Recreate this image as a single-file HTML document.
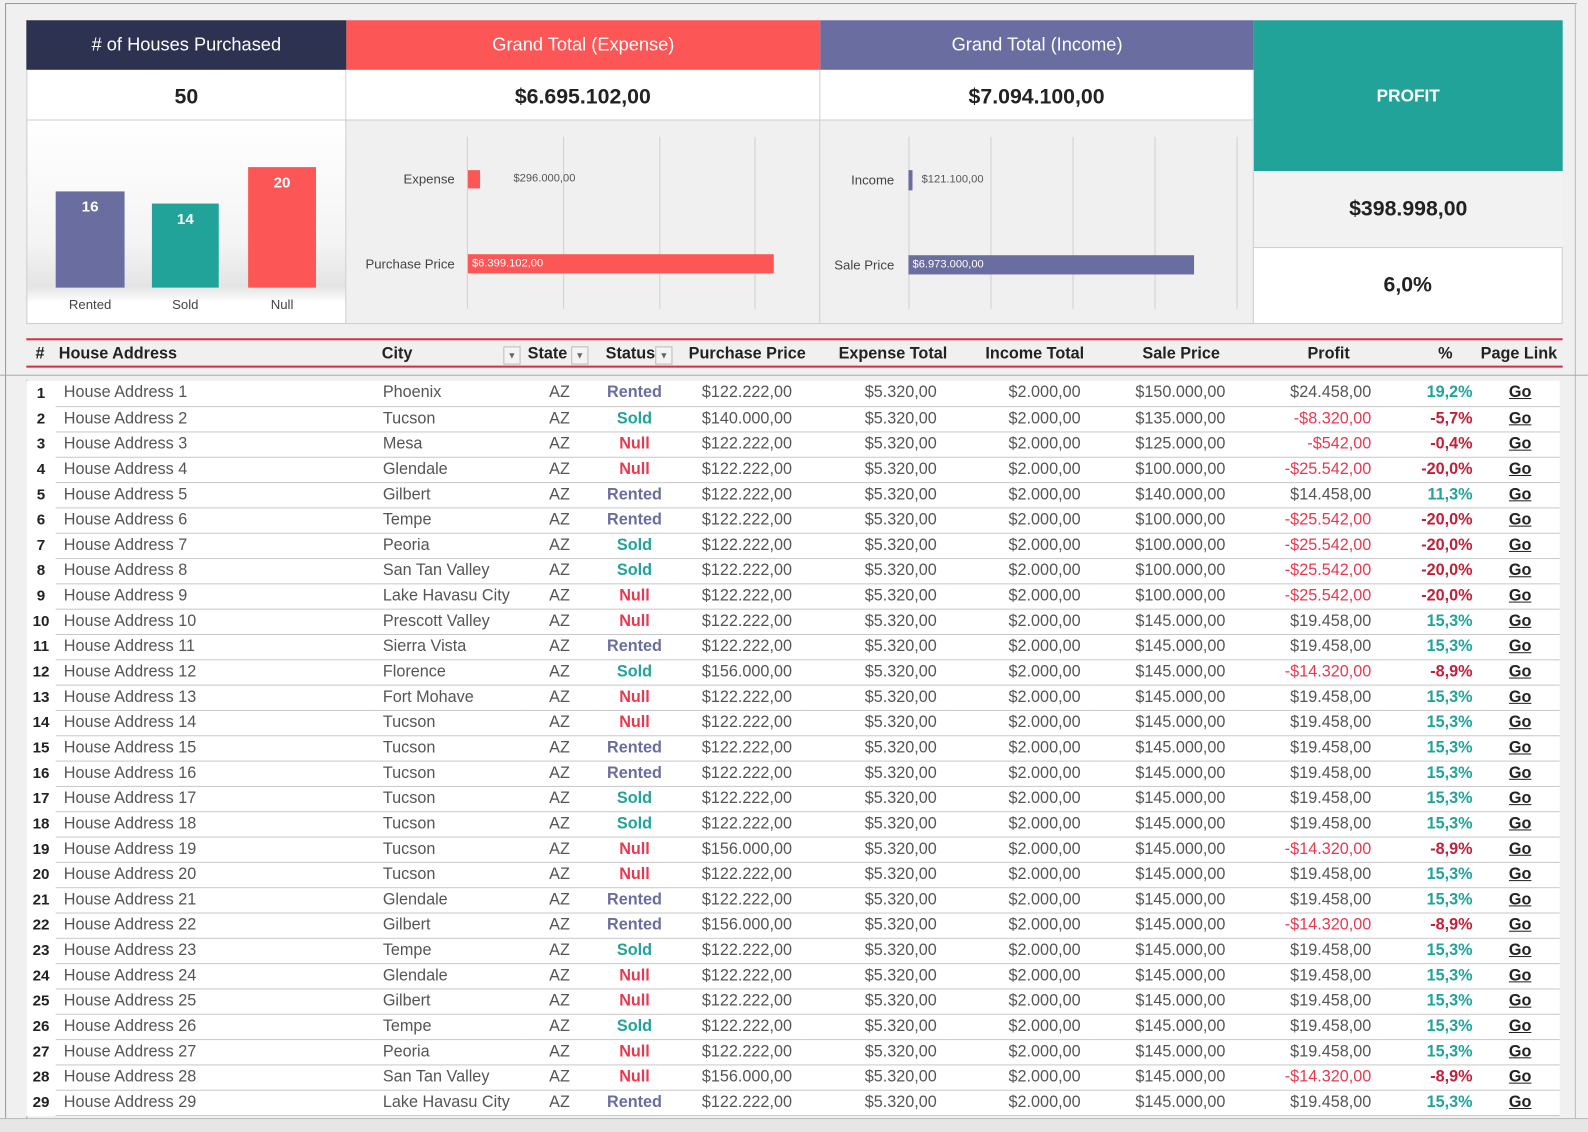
<!DOCTYPE html>
<html><head><meta charset="utf-8">
<style>
*{margin:0;padding:0;box-sizing:border-box}
body{width:1588px;height:1128px;background:#f0f0f0;font-family:"Liberation Sans",sans-serif;position:relative;overflow:hidden;color:#333}
#w{position:absolute;left:0;top:0;width:1568px;height:1114px;transform:scale(1.01276);transform-origin:0 0}
.a{position:absolute}
.hd{position:absolute;top:20px;height:49px;color:#fff;font-size:18px;display:flex;align-items:center;justify-content:center}
.val{position:absolute;top:69px;height:50px;background:#fff;font-size:21px;font-weight:bold;color:#222;display:flex;align-items:center;justify-content:center;border-bottom:1px solid #ccc;border-right:1px solid #ccc;padding-top:4px}
.gl{position:absolute;width:1px;background:#d0d0d0;top:135px;height:170px}
.lbl{position:absolute;font-size:13px;color:#444;text-align:right}
.sm{position:absolute;font-size:11px;color:#555}
table{position:absolute;left:26px;top:376px;border-collapse:collapse;table-layout:fixed;width:1514px;background:#fff;font-size:16px;color:#555}
td{height:25px;border-bottom:1px solid #c8c8c8;white-space:nowrap;overflow:hidden;padding:0 8px}
td:first-child{border-bottom:none;text-align:center;font-weight:bold;color:#222;padding:0;font-size:15px}
.c{text-align:center}.r{text-align:right}
.R{color:#6a6d9f;font-weight:bold}.S{color:#22a39a;font-weight:bold}.N{color:#e8384f;font-weight:bold}
.neg{color:#e8384f}.pp{color:#22a39a;font-weight:bold}.np{color:#c0203a;font-weight:bold}
.go{font-weight:bold;text-decoration:underline;color:#222}
.th{position:absolute;top:341px;font-size:16px;font-weight:bold;color:#222}
.flt{position:absolute;top:342px;width:17px;height:18px;border:1px solid #bbb;background:#f4f4f4;font-size:9px;color:#666;text-align:center;line-height:16px}
</style></head><body><div id="w">
<div class="a" style="left:5px;top:3px;width:1px;height:1108px;background:#999"></div>
<div class="a" style="left:5px;top:3px;width:1552px;height:1px;background:#999"></div>
<div class="a" style="left:1555px;top:3px;width:1px;height:1108px;background:#bbb"></div>
<div class="a" style="left:0;top:1104px;width:1568px;height:14px;background:#e6e6e6;border-top:1px solid #bbb"></div>

<div class="hd" style="left:26px;width:316px;background:#2d3250">&#35; of Houses Purchased</div>
<div class="hd" style="left:342px;width:468px;background:#fc5656">Grand Total (Expense)</div>
<div class="hd" style="left:810px;width:428px;background:#6a6d9f">Grand Total (Income)</div>
<div class="a" style="left:1238px;top:20px;width:305px;height:149px;background:#22a39a;color:#fff;font-weight:bold;font-size:17px;display:flex;align-items:center;justify-content:center">PROFIT</div>
<div class="val" style="left:26px;width:316px;border-left:1px solid #ccc">50</div>
<div class="val" style="left:342px;width:468px">$6.695.102,00</div>
<div class="val" style="left:810px;width:428px">$7.094.100,00</div>
<div class="a" style="left:1238px;top:169px;width:305px;height:76px;background:#f2f2f2;border-bottom:1px solid #ccc;font-size:21px;font-weight:bold;color:#222;display:flex;align-items:center;justify-content:center">$398.998,00</div>
<div class="a" style="left:1238px;top:245px;width:305px;height:75px;background:#fff;border-bottom:1px solid #ccc;border-right:1px solid #ccc;font-size:21px;font-weight:bold;color:#222;display:flex;align-items:center;justify-content:center">6,0%</div>

<div class="a" style="left:26px;top:119px;width:316px;height:201px;background:linear-gradient(#fff 0%,#f4f4f4 60%,#e4e4e4 82%,#fff 90%);border:1px solid #ccc;border-top:none"></div>
<div class="a" style="left:55px;top:189px;width:68px;height:95px;background:#6a6d9f;color:#fff;font-weight:bold;font-size:15px;text-align:center;padding-top:7px">16</div>
<div class="a" style="left:150px;top:201px;width:66px;height:83px;background:#22a39a;color:#fff;font-weight:bold;font-size:15px;text-align:center;padding-top:7px">14</div>
<div class="a" style="left:245px;top:165px;width:67px;height:119px;background:#fc5656;color:#fff;font-weight:bold;font-size:15px;text-align:center;padding-top:7px">20</div>
<div class="lbl" style="left:55px;top:293px;width:68px;text-align:center">Rented</div>
<div class="lbl" style="left:150px;top:293px;width:66px;text-align:center">Sold</div>
<div class="lbl" style="left:245px;top:293px;width:67px;text-align:center">Null</div>

<div class="a" style="left:342px;top:119px;width:468px;height:201px;background:#f0f0f0;border-bottom:1px solid #ccc;border-right:1px solid #ccc"></div>
<div class="gl" style="left:461px"></div><div class="gl" style="left:556px"></div><div class="gl" style="left:651px"></div><div class="gl" style="left:745px"></div>
<div class="lbl" style="left:350px;top:169px;width:99px">Expense</div>
<div class="lbl" style="left:340px;top:253px;width:109px">Purchase Price</div>
<div class="a" style="left:462px;top:168px;width:12px;height:18px;background:#fc5656"></div>
<div class="sm" style="left:507px;top:170px">$296.000,00</div>
<div class="a" style="left:462px;top:251px;width:302px;height:19px;background:#fc5656"></div>
<div class="sm" style="left:466px;top:254px;color:#fff">$6.399.102,00</div>

<div class="a" style="left:810px;top:119px;width:428px;height:201px;background:#f0f0f0;border-bottom:1px solid #ccc;border-right:1px solid #ccc"></div>
<div class="gl" style="left:897px"></div><div class="gl" style="left:978px"></div><div class="gl" style="left:1059px"></div><div class="gl" style="left:1140px"></div><div class="gl" style="left:1221px"></div>
<div class="lbl" style="left:810px;top:170px;width:73px">Income</div>
<div class="lbl" style="left:810px;top:254px;width:73px">Sale Price</div>
<div class="a" style="left:897px;top:168px;width:4px;height:20px;background:#6a6d9f"></div>
<div class="sm" style="left:910px;top:171px">$121.100,00</div>
<div class="a" style="left:897px;top:252px;width:282px;height:19px;background:#6a6d9f"></div>
<div class="sm" style="left:901px;top:255px;color:#fff">$6.973.000,00</div>

<div class="a" style="left:26px;top:334px;width:1517px;height:2px;background:#d0304a"></div>
<div class="a" style="left:26px;top:361px;width:1517px;height:2px;background:#d0304a"></div>
<div class="a" style="left:0;top:370px;width:1568px;height:1px;background:#aaa"></div>
<div class="th" style="left:35px">#</div>
<div class="th" style="left:58px">House Address</div>
<div class="th" style="left:377px">City</div>
<div class="flt" style="left:497px">▼</div>
<div class="th" style="left:521px">State</div>
<div class="flt" style="left:564px">▼</div>
<div class="th" style="left:598px">Status</div>
<div class="flt" style="left:647px">▼</div>
<div class="th" style="left:680px">Purchase Price</div>
<div class="th" style="left:828px">Expense Total</div>
<div class="th" style="left:973px">Income Total</div>
<div class="th" style="left:1128px">Sale Price</div>
<div class="th" style="left:1291px">Profit</div>
<div class="th" style="left:1420px">%</div>
<div class="th" style="left:1462px">Page Link</div>
<div class="a" style="left:26px;top:375px;width:1px;height:730px;background:#aaa"></div>

<table>
<colgroup><col style="width:29px"><col style="width:315px"><col style="width:150px"><col style="width:65px"><col style="width:83px"><col style="width:122px"><col style="width:143px"><col style="width:142px"><col style="width:143px"><col style="width:144px"><col style="width:100px"><col style="width:78px"></colgroup>
<tr><td>1</td><td>House Address 1</td><td>Phoenix</td><td class="c">AZ</td><td class="c R">Rented</td><td class="r">$122.222,00</td><td class="r">$5.320,00</td><td class="r">$2.000,00</td><td class="r">$150.000,00</td><td class="r">$24.458,00</td><td class="r pp">19,2%</td><td class="c go">Go</td></tr>
<tr><td>2</td><td>House Address 2</td><td>Tucson</td><td class="c">AZ</td><td class="c S">Sold</td><td class="r">$140.000,00</td><td class="r">$5.320,00</td><td class="r">$2.000,00</td><td class="r">$135.000,00</td><td class="r neg">-$8.320,00</td><td class="r np">-5,7%</td><td class="c go">Go</td></tr>
<tr><td>3</td><td>House Address 3</td><td>Mesa</td><td class="c">AZ</td><td class="c N">Null</td><td class="r">$122.222,00</td><td class="r">$5.320,00</td><td class="r">$2.000,00</td><td class="r">$125.000,00</td><td class="r neg">-$542,00</td><td class="r np">-0,4%</td><td class="c go">Go</td></tr>
<tr><td>4</td><td>House Address 4</td><td>Glendale</td><td class="c">AZ</td><td class="c N">Null</td><td class="r">$122.222,00</td><td class="r">$5.320,00</td><td class="r">$2.000,00</td><td class="r">$100.000,00</td><td class="r neg">-$25.542,00</td><td class="r np">-20,0%</td><td class="c go">Go</td></tr>
<tr><td>5</td><td>House Address 5</td><td>Gilbert</td><td class="c">AZ</td><td class="c R">Rented</td><td class="r">$122.222,00</td><td class="r">$5.320,00</td><td class="r">$2.000,00</td><td class="r">$140.000,00</td><td class="r">$14.458,00</td><td class="r pp">11,3%</td><td class="c go">Go</td></tr>
<tr><td>6</td><td>House Address 6</td><td>Tempe</td><td class="c">AZ</td><td class="c R">Rented</td><td class="r">$122.222,00</td><td class="r">$5.320,00</td><td class="r">$2.000,00</td><td class="r">$100.000,00</td><td class="r neg">-$25.542,00</td><td class="r np">-20,0%</td><td class="c go">Go</td></tr>
<tr><td>7</td><td>House Address 7</td><td>Peoria</td><td class="c">AZ</td><td class="c S">Sold</td><td class="r">$122.222,00</td><td class="r">$5.320,00</td><td class="r">$2.000,00</td><td class="r">$100.000,00</td><td class="r neg">-$25.542,00</td><td class="r np">-20,0%</td><td class="c go">Go</td></tr>
<tr><td>8</td><td>House Address 8</td><td>San Tan Valley</td><td class="c">AZ</td><td class="c S">Sold</td><td class="r">$122.222,00</td><td class="r">$5.320,00</td><td class="r">$2.000,00</td><td class="r">$100.000,00</td><td class="r neg">-$25.542,00</td><td class="r np">-20,0%</td><td class="c go">Go</td></tr>
<tr><td>9</td><td>House Address 9</td><td>Lake Havasu City</td><td class="c">AZ</td><td class="c N">Null</td><td class="r">$122.222,00</td><td class="r">$5.320,00</td><td class="r">$2.000,00</td><td class="r">$100.000,00</td><td class="r neg">-$25.542,00</td><td class="r np">-20,0%</td><td class="c go">Go</td></tr>
<tr><td>10</td><td>House Address 10</td><td>Prescott Valley</td><td class="c">AZ</td><td class="c N">Null</td><td class="r">$122.222,00</td><td class="r">$5.320,00</td><td class="r">$2.000,00</td><td class="r">$145.000,00</td><td class="r">$19.458,00</td><td class="r pp">15,3%</td><td class="c go">Go</td></tr>
<tr><td>11</td><td>House Address 11</td><td>Sierra Vista</td><td class="c">AZ</td><td class="c R">Rented</td><td class="r">$122.222,00</td><td class="r">$5.320,00</td><td class="r">$2.000,00</td><td class="r">$145.000,00</td><td class="r">$19.458,00</td><td class="r pp">15,3%</td><td class="c go">Go</td></tr>
<tr><td>12</td><td>House Address 12</td><td>Florence</td><td class="c">AZ</td><td class="c S">Sold</td><td class="r">$156.000,00</td><td class="r">$5.320,00</td><td class="r">$2.000,00</td><td class="r">$145.000,00</td><td class="r neg">-$14.320,00</td><td class="r np">-8,9%</td><td class="c go">Go</td></tr>
<tr><td>13</td><td>House Address 13</td><td>Fort Mohave</td><td class="c">AZ</td><td class="c N">Null</td><td class="r">$122.222,00</td><td class="r">$5.320,00</td><td class="r">$2.000,00</td><td class="r">$145.000,00</td><td class="r">$19.458,00</td><td class="r pp">15,3%</td><td class="c go">Go</td></tr>
<tr><td>14</td><td>House Address 14</td><td>Tucson</td><td class="c">AZ</td><td class="c N">Null</td><td class="r">$122.222,00</td><td class="r">$5.320,00</td><td class="r">$2.000,00</td><td class="r">$145.000,00</td><td class="r">$19.458,00</td><td class="r pp">15,3%</td><td class="c go">Go</td></tr>
<tr><td>15</td><td>House Address 15</td><td>Tucson</td><td class="c">AZ</td><td class="c R">Rented</td><td class="r">$122.222,00</td><td class="r">$5.320,00</td><td class="r">$2.000,00</td><td class="r">$145.000,00</td><td class="r">$19.458,00</td><td class="r pp">15,3%</td><td class="c go">Go</td></tr>
<tr><td>16</td><td>House Address 16</td><td>Tucson</td><td class="c">AZ</td><td class="c R">Rented</td><td class="r">$122.222,00</td><td class="r">$5.320,00</td><td class="r">$2.000,00</td><td class="r">$145.000,00</td><td class="r">$19.458,00</td><td class="r pp">15,3%</td><td class="c go">Go</td></tr>
<tr><td>17</td><td>House Address 17</td><td>Tucson</td><td class="c">AZ</td><td class="c S">Sold</td><td class="r">$122.222,00</td><td class="r">$5.320,00</td><td class="r">$2.000,00</td><td class="r">$145.000,00</td><td class="r">$19.458,00</td><td class="r pp">15,3%</td><td class="c go">Go</td></tr>
<tr><td>18</td><td>House Address 18</td><td>Tucson</td><td class="c">AZ</td><td class="c S">Sold</td><td class="r">$122.222,00</td><td class="r">$5.320,00</td><td class="r">$2.000,00</td><td class="r">$145.000,00</td><td class="r">$19.458,00</td><td class="r pp">15,3%</td><td class="c go">Go</td></tr>
<tr><td>19</td><td>House Address 19</td><td>Tucson</td><td class="c">AZ</td><td class="c N">Null</td><td class="r">$156.000,00</td><td class="r">$5.320,00</td><td class="r">$2.000,00</td><td class="r">$145.000,00</td><td class="r neg">-$14.320,00</td><td class="r np">-8,9%</td><td class="c go">Go</td></tr>
<tr><td>20</td><td>House Address 20</td><td>Tucson</td><td class="c">AZ</td><td class="c N">Null</td><td class="r">$122.222,00</td><td class="r">$5.320,00</td><td class="r">$2.000,00</td><td class="r">$145.000,00</td><td class="r">$19.458,00</td><td class="r pp">15,3%</td><td class="c go">Go</td></tr>
<tr><td>21</td><td>House Address 21</td><td>Glendale</td><td class="c">AZ</td><td class="c R">Rented</td><td class="r">$122.222,00</td><td class="r">$5.320,00</td><td class="r">$2.000,00</td><td class="r">$145.000,00</td><td class="r">$19.458,00</td><td class="r pp">15,3%</td><td class="c go">Go</td></tr>
<tr><td>22</td><td>House Address 22</td><td>Gilbert</td><td class="c">AZ</td><td class="c R">Rented</td><td class="r">$156.000,00</td><td class="r">$5.320,00</td><td class="r">$2.000,00</td><td class="r">$145.000,00</td><td class="r neg">-$14.320,00</td><td class="r np">-8,9%</td><td class="c go">Go</td></tr>
<tr><td>23</td><td>House Address 23</td><td>Tempe</td><td class="c">AZ</td><td class="c S">Sold</td><td class="r">$122.222,00</td><td class="r">$5.320,00</td><td class="r">$2.000,00</td><td class="r">$145.000,00</td><td class="r">$19.458,00</td><td class="r pp">15,3%</td><td class="c go">Go</td></tr>
<tr><td>24</td><td>House Address 24</td><td>Glendale</td><td class="c">AZ</td><td class="c N">Null</td><td class="r">$122.222,00</td><td class="r">$5.320,00</td><td class="r">$2.000,00</td><td class="r">$145.000,00</td><td class="r">$19.458,00</td><td class="r pp">15,3%</td><td class="c go">Go</td></tr>
<tr><td>25</td><td>House Address 25</td><td>Gilbert</td><td class="c">AZ</td><td class="c N">Null</td><td class="r">$122.222,00</td><td class="r">$5.320,00</td><td class="r">$2.000,00</td><td class="r">$145.000,00</td><td class="r">$19.458,00</td><td class="r pp">15,3%</td><td class="c go">Go</td></tr>
<tr><td>26</td><td>House Address 26</td><td>Tempe</td><td class="c">AZ</td><td class="c S">Sold</td><td class="r">$122.222,00</td><td class="r">$5.320,00</td><td class="r">$2.000,00</td><td class="r">$145.000,00</td><td class="r">$19.458,00</td><td class="r pp">15,3%</td><td class="c go">Go</td></tr>
<tr><td>27</td><td>House Address 27</td><td>Peoria</td><td class="c">AZ</td><td class="c N">Null</td><td class="r">$122.222,00</td><td class="r">$5.320,00</td><td class="r">$2.000,00</td><td class="r">$145.000,00</td><td class="r">$19.458,00</td><td class="r pp">15,3%</td><td class="c go">Go</td></tr>
<tr><td>28</td><td>House Address 28</td><td>San Tan Valley</td><td class="c">AZ</td><td class="c N">Null</td><td class="r">$156.000,00</td><td class="r">$5.320,00</td><td class="r">$2.000,00</td><td class="r">$145.000,00</td><td class="r neg">-$14.320,00</td><td class="r np">-8,9%</td><td class="c go">Go</td></tr>
<tr><td>29</td><td>House Address 29</td><td>Lake Havasu City</td><td class="c">AZ</td><td class="c R">Rented</td><td class="r">$122.222,00</td><td class="r">$5.320,00</td><td class="r">$2.000,00</td><td class="r">$145.000,00</td><td class="r">$19.458,00</td><td class="r pp">15,3%</td><td class="c go">Go</td></tr>
</table>
</div></body></html>
